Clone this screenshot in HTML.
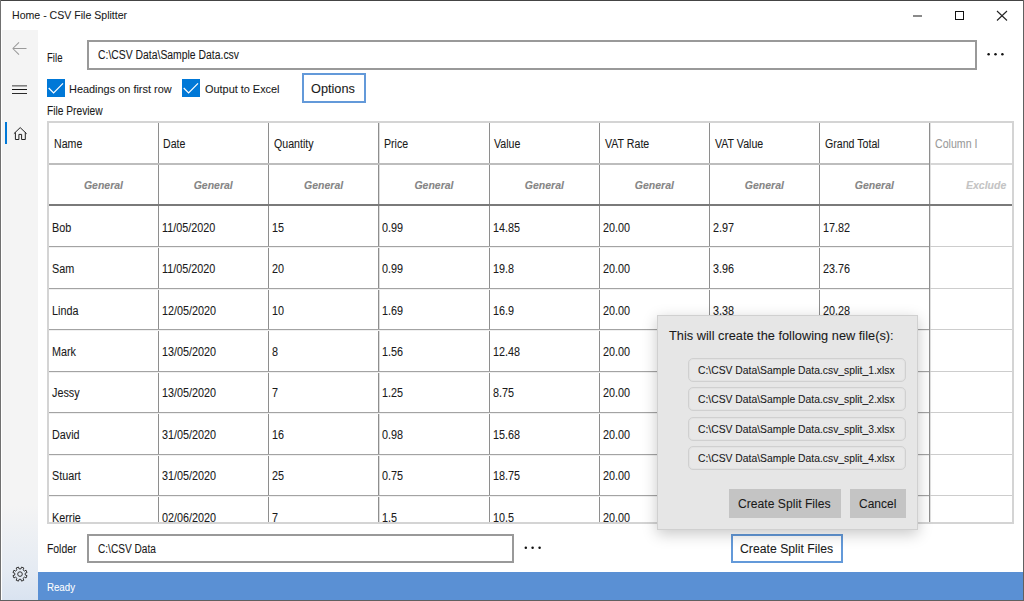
<!DOCTYPE html>
<html><head><meta charset="utf-8">
<style>
*{margin:0;padding:0;box-sizing:border-box}
html,body{width:1024px;height:601px;overflow:hidden;background:#fff}
body{position:relative;font-family:"Liberation Sans",sans-serif;color:#1a1a1a}
.a{position:absolute}
.t{position:absolute;white-space:pre;line-height:1;font-size:11.5px;transform-origin:0 0;-webkit-text-stroke:0.08px currentColor}
</style></head><body>
<div class="a" style="left:0;top:0;width:1024px;height:1px;background:#444"></div>
<div class="a" style="left:0;top:0;width:1px;height:601px;background:#707070"></div>
<div class="a" style="left:1023px;top:0;width:1px;height:601px;background:#606060"></div>
<div class="a" style="left:0;top:600px;width:1024px;height:1px;background:#606060"></div>
<div class="t" style="left:12.10px;top:10.07px;font-size:11.5px;transform:scaleX(0.9191);;">Home - CSV File Splitter</div>
<div class="a" style="left:913px;top:15px;width:9px;height:2px;background:#8a8a8a"></div>
<div class="a" style="left:955px;top:11px;width:9px;height:9px;border:1px solid #111"></div>
<svg class="a" style="left:996px;top:10px" width="12" height="12" viewBox="0 0 12 12"><path d="M1 1L11 10.5M11 1L1 10.5" stroke="#222" stroke-width="1.1"/></svg>
<div class="a" style="left:2px;top:30px;width:36px;height:570px;background:linear-gradient(#f4f4f4 0px,#f4f4f4 475px,#e5ebf3 540px,#d9e3f0 570px)"></div>
<svg class="a" style="left:0;top:30px" width="38" height="570" viewBox="0 30 38 570">
<path d="M12.5 48.5H26.5M12.8 48.5L19 42.3M12.8 48.5L19 54.7" stroke="#9a9a9a" stroke-width="1.05" fill="none"/>
<rect x="12" y="85" width="15" height="1.6" fill="#808080"/>
<rect x="12" y="89" width="15" height="1" fill="#151515"/>
<rect x="12" y="93" width="15" height="1" fill="#2a2a2a"/>
<rect x="5" y="122" width="2" height="22" fill="#0078d7"/>
<path d="M13.9 133.7L20.2 127.6L26.6 133.7M15.4 132.4V139.5H18.9V134.4H21.6V139.5H25.3V132.4" stroke="#222" stroke-width="1" fill="none"/>
<path d="M25.22 575.03 L27.03 575.64 L26.06 577.98 L24.35 577.13 L23.03 578.45 L23.88 580.16 L21.54 581.13 L20.93 579.32 L19.07 579.32 L18.46 581.13 L16.12 580.16 L16.97 578.45 L15.65 577.13 L13.94 577.98 L12.97 575.64 L14.78 575.03 L14.78 573.17 L12.97 572.56 L13.94 570.22 L15.65 571.07 L16.97 569.75 L16.12 568.04 L18.46 567.07 L19.07 568.88 L20.93 568.88 L21.54 567.07 L23.88 568.04 L23.03 569.75 L24.35 571.07 L26.06 570.22 L27.03 572.56 L25.22 573.17Z" stroke="#333" stroke-width="1" fill="none"/>
<circle cx="20" cy="574.1" r="2.3" stroke="#333" stroke-width="1" fill="none"/>
</svg>
<div class="t" style="left:47.20px;top:52.24px;font-size:12px;transform:scaleX(0.8008);;">File</div>
<div class="a" style="left:87px;top:40px;width:890px;height:30px;border:2px solid #999"></div>
<div class="t" style="left:98.20px;top:49.24px;font-size:12px;transform:scaleX(0.8663);;">C:\CSV Data\Sample Data.csv</div>
<svg class="a" style="left:980px;top:48px" width="30" height="12"><circle cx="8.6" cy="6.3" r="1.25" fill="#111"/><circle cx="15.5" cy="6.3" r="1.25" fill="#111"/><circle cx="22.4" cy="6.3" r="1.25" fill="#111"/></svg>
<div class="a" style="left:47px;top:79px;width:18px;height:18px;background:#0078d7"></div>
<svg class="a" style="left:47px;top:79px" width="18" height="18"><path d="M1.7 9L6.6 14L16 4.3" stroke="#fff" stroke-width="1.2" fill="none"/></svg>
<div class="a" style="left:182px;top:79px;width:18px;height:18px;background:#0078d7"></div>
<svg class="a" style="left:182px;top:79px" width="18" height="18"><path d="M1.7 9L6.6 14L16 4.3" stroke="#fff" stroke-width="1.2" fill="none"/></svg>
<div class="t" style="left:69.10px;top:83.45px;font-size:11.75px;transform:scaleX(0.9297);;">Headings on first row</div>
<div class="t" style="left:204.50px;top:83.45px;font-size:11.75px;transform:scaleX(0.9275);;">Output to Excel</div>
<div class="a" style="left:302px;top:73px;width:64px;height:30px;border:2px solid #6399d9"></div>
<div class="t" style="left:311.00px;top:81.80px;font-size:13px;transform:scaleX(0.9779);;">Options</div>
<div class="t" style="left:47.00px;top:105.14px;font-size:12px;transform:scaleX(0.8515);;">File Preview</div>
<div class="a" style="left:47px;top:121px;width:967px;height:403px;border:2px solid #d4d4d4"></div>
<div class="a" style="left:49px;top:123px;width:963px;height:399px;overflow:hidden">
<div class="a" style="left:109px;top:0px;width:1px;height:400px;background:#8e8e8e"></div>
<div class="a" style="left:219px;top:0px;width:1px;height:400px;background:#8e8e8e"></div>
<div class="a" style="left:329px;top:0px;width:1px;height:400px;background:#8e8e8e"></div>
<div class="a" style="left:440px;top:0px;width:1px;height:400px;background:#8e8e8e"></div>
<div class="a" style="left:550px;top:0px;width:1px;height:400px;background:#8e8e8e"></div>
<div class="a" style="left:660px;top:0px;width:1px;height:400px;background:#8e8e8e"></div>
<div class="a" style="left:770px;top:0px;width:1px;height:400px;background:#8e8e8e"></div>
<div class="a" style="left:880px;top:0px;width:1px;height:400px;background:#8e8e8e"></div>
<div class="a" style="left:330px;top:0px;width:1px;height:400px;background:#dcdcdc"></div>
<div class="a" style="left:881px;top:0px;width:1px;height:400px;background:#e0e0e0"></div>
<div class="a" style="left:0px;top:40px;width:880px;height:1.5px;background:#bdbdbd"></div>
<div class="a" style="left:881px;top:40px;width:83px;height:1.5px;background:#d6d6d6"></div>
<div class="a" style="left:0px;top:81px;width:964px;height:2px;background:#7a7a7a"></div>
<div class="a" style="left:0px;top:123px;width:880px;height:1px;background:#a3a3a3"></div>
<div class="a" style="left:0px;top:124px;width:880px;height:1px;background:#f0f0f0"></div>
<div class="a" style="left:881px;top:123px;width:83px;height:1px;background:#cdcdcd"></div>
<div class="a" style="left:0px;top:165px;width:880px;height:1px;background:#a3a3a3"></div>
<div class="a" style="left:0px;top:166px;width:880px;height:1px;background:#f0f0f0"></div>
<div class="a" style="left:881px;top:165px;width:83px;height:1px;background:#cdcdcd"></div>
<div class="a" style="left:0px;top:206px;width:880px;height:1px;background:#a3a3a3"></div>
<div class="a" style="left:0px;top:207px;width:880px;height:1px;background:#f0f0f0"></div>
<div class="a" style="left:881px;top:206px;width:83px;height:1px;background:#cdcdcd"></div>
<div class="a" style="left:0px;top:248px;width:880px;height:1px;background:#a3a3a3"></div>
<div class="a" style="left:0px;top:249px;width:880px;height:1px;background:#f0f0f0"></div>
<div class="a" style="left:881px;top:248px;width:83px;height:1px;background:#cdcdcd"></div>
<div class="a" style="left:0px;top:289px;width:880px;height:1px;background:#a3a3a3"></div>
<div class="a" style="left:0px;top:290px;width:880px;height:1px;background:#f0f0f0"></div>
<div class="a" style="left:881px;top:289px;width:83px;height:1px;background:#cdcdcd"></div>
<div class="a" style="left:0px;top:331px;width:880px;height:1px;background:#a3a3a3"></div>
<div class="a" style="left:0px;top:332px;width:880px;height:1px;background:#f0f0f0"></div>
<div class="a" style="left:881px;top:331px;width:83px;height:1px;background:#cdcdcd"></div>
<div class="a" style="left:0px;top:372px;width:880px;height:1px;background:#a3a3a3"></div>
<div class="a" style="left:0px;top:373px;width:880px;height:1px;background:#f0f0f0"></div>
<div class="a" style="left:881px;top:372px;width:83px;height:1px;background:#cdcdcd"></div>
<div class="t" style="left:4.90px;top:15.44px;font-size:12px;transform:scaleX(0.885);color:#1a1a1a">Name</div>
<div class="t" style="left:114.20px;top:15.44px;font-size:12px;transform:scaleX(0.885);color:#1a1a1a">Date</div>
<div class="t" style="left:224.70px;top:15.44px;font-size:12px;transform:scaleX(0.885);color:#1a1a1a">Quantity</div>
<div class="t" style="left:334.90px;top:15.44px;font-size:12px;transform:scaleX(0.885);color:#1a1a1a">Price</div>
<div class="t" style="left:445.40px;top:15.44px;font-size:12px;transform:scaleX(0.885);color:#1a1a1a">Value</div>
<div class="t" style="left:555.70px;top:15.44px;font-size:12px;transform:scaleX(0.885);color:#1a1a1a">VAT Rate</div>
<div class="t" style="left:665.50px;top:15.44px;font-size:12px;transform:scaleX(0.885);color:#1a1a1a">VAT Value</div>
<div class="t" style="left:775.70px;top:15.44px;font-size:12px;transform:scaleX(0.885);color:#1a1a1a">Grand Total</div>
<div class="t" style="left:885.50px;top:15.44px;font-size:12px;transform:scaleX(0.885);color:#9a9a9a">Column I</div>
<div class="t" style="left:0px;top:56.96px;width:109px;text-align:center;font-size:10.5px;font-weight:bold;font-style:italic;color:#858585">General</div>
<div class="t" style="left:109px;top:56.96px;width:110.5px;text-align:center;font-size:10.5px;font-weight:bold;font-style:italic;color:#858585">General</div>
<div class="t" style="left:219.5px;top:56.96px;width:110.19999999999999px;text-align:center;font-size:10.5px;font-weight:bold;font-style:italic;color:#858585">General</div>
<div class="t" style="left:329.7px;top:56.96px;width:110.5px;text-align:center;font-size:10.5px;font-weight:bold;font-style:italic;color:#858585">General</div>
<div class="t" style="left:440.2px;top:56.96px;width:110.30000000000001px;text-align:center;font-size:10.5px;font-weight:bold;font-style:italic;color:#858585">General</div>
<div class="t" style="left:550.5px;top:56.96px;width:109.79999999999995px;text-align:center;font-size:10.5px;font-weight:bold;font-style:italic;color:#858585">General</div>
<div class="t" style="left:660.3px;top:56.96px;width:110.20000000000005px;text-align:center;font-size:10.5px;font-weight:bold;font-style:italic;color:#858585">General</div>
<div class="t" style="left:770.5px;top:56.96px;width:109.79999999999995px;text-align:center;font-size:10.5px;font-weight:bold;font-style:italic;color:#858585">General</div>
<div class="t" style="left:917px;top:56.96px;font-size:10.5px;font-weight:bold;font-style:italic;color:#c4c4c4">Exclude</div>
<div class="t" style="left:2.90px;top:98.74px;font-size:12px;transform:scaleX(0.90)">Bob</div>
<div class="t" style="left:112.60px;top:98.74px;font-size:12px;transform:scaleX(0.90)">11/05/2020</div>
<div class="t" style="left:223.10px;top:98.74px;font-size:12px;transform:scaleX(0.90)">15</div>
<div class="t" style="left:333.30px;top:98.74px;font-size:12px;transform:scaleX(0.90)">0.99</div>
<div class="t" style="left:443.80px;top:98.74px;font-size:12px;transform:scaleX(0.90)">14.85</div>
<div class="t" style="left:554.10px;top:98.74px;font-size:12px;transform:scaleX(0.90)">20.00</div>
<div class="t" style="left:663.90px;top:98.74px;font-size:12px;transform:scaleX(0.90)">2.97</div>
<div class="t" style="left:774.10px;top:98.74px;font-size:12px;transform:scaleX(0.90)">17.82</div>
<div class="t" style="left:2.90px;top:140.16px;font-size:12px;transform:scaleX(0.90)">Sam</div>
<div class="t" style="left:112.60px;top:140.16px;font-size:12px;transform:scaleX(0.90)">11/05/2020</div>
<div class="t" style="left:223.10px;top:140.16px;font-size:12px;transform:scaleX(0.90)">20</div>
<div class="t" style="left:333.30px;top:140.16px;font-size:12px;transform:scaleX(0.90)">0.99</div>
<div class="t" style="left:443.80px;top:140.16px;font-size:12px;transform:scaleX(0.90)">19.8</div>
<div class="t" style="left:554.10px;top:140.16px;font-size:12px;transform:scaleX(0.90)">20.00</div>
<div class="t" style="left:663.90px;top:140.16px;font-size:12px;transform:scaleX(0.90)">3.96</div>
<div class="t" style="left:774.10px;top:140.16px;font-size:12px;transform:scaleX(0.90)">23.76</div>
<div class="t" style="left:2.90px;top:181.58px;font-size:12px;transform:scaleX(0.90)">Linda</div>
<div class="t" style="left:112.60px;top:181.58px;font-size:12px;transform:scaleX(0.90)">12/05/2020</div>
<div class="t" style="left:223.10px;top:181.58px;font-size:12px;transform:scaleX(0.90)">10</div>
<div class="t" style="left:333.30px;top:181.58px;font-size:12px;transform:scaleX(0.90)">1.69</div>
<div class="t" style="left:443.80px;top:181.58px;font-size:12px;transform:scaleX(0.90)">16.9</div>
<div class="t" style="left:554.10px;top:181.58px;font-size:12px;transform:scaleX(0.90)">20.00</div>
<div class="t" style="left:663.90px;top:181.58px;font-size:12px;transform:scaleX(0.90)">3.38</div>
<div class="t" style="left:774.10px;top:181.58px;font-size:12px;transform:scaleX(0.90)">20.28</div>
<div class="t" style="left:2.90px;top:223.00px;font-size:12px;transform:scaleX(0.90)">Mark</div>
<div class="t" style="left:112.60px;top:223.00px;font-size:12px;transform:scaleX(0.90)">13/05/2020</div>
<div class="t" style="left:223.10px;top:223.00px;font-size:12px;transform:scaleX(0.90)">8</div>
<div class="t" style="left:333.30px;top:223.00px;font-size:12px;transform:scaleX(0.90)">1.56</div>
<div class="t" style="left:443.80px;top:223.00px;font-size:12px;transform:scaleX(0.90)">12.48</div>
<div class="t" style="left:554.10px;top:223.00px;font-size:12px;transform:scaleX(0.90)">20.00</div>
<div class="t" style="left:663.90px;top:223.00px;font-size:12px;transform:scaleX(0.90)">2.50</div>
<div class="t" style="left:774.10px;top:223.00px;font-size:12px;transform:scaleX(0.90)">14.98</div>
<div class="t" style="left:2.90px;top:264.42px;font-size:12px;transform:scaleX(0.90)">Jessy</div>
<div class="t" style="left:112.60px;top:264.42px;font-size:12px;transform:scaleX(0.90)">13/05/2020</div>
<div class="t" style="left:223.10px;top:264.42px;font-size:12px;transform:scaleX(0.90)">7</div>
<div class="t" style="left:333.30px;top:264.42px;font-size:12px;transform:scaleX(0.90)">1.25</div>
<div class="t" style="left:443.80px;top:264.42px;font-size:12px;transform:scaleX(0.90)">8.75</div>
<div class="t" style="left:554.10px;top:264.42px;font-size:12px;transform:scaleX(0.90)">20.00</div>
<div class="t" style="left:663.90px;top:264.42px;font-size:12px;transform:scaleX(0.90)">1.75</div>
<div class="t" style="left:774.10px;top:264.42px;font-size:12px;transform:scaleX(0.90)">10.50</div>
<div class="t" style="left:2.90px;top:305.84px;font-size:12px;transform:scaleX(0.90)">David</div>
<div class="t" style="left:112.60px;top:305.84px;font-size:12px;transform:scaleX(0.90)">31/05/2020</div>
<div class="t" style="left:223.10px;top:305.84px;font-size:12px;transform:scaleX(0.90)">16</div>
<div class="t" style="left:333.30px;top:305.84px;font-size:12px;transform:scaleX(0.90)">0.98</div>
<div class="t" style="left:443.80px;top:305.84px;font-size:12px;transform:scaleX(0.90)">15.68</div>
<div class="t" style="left:554.10px;top:305.84px;font-size:12px;transform:scaleX(0.90)">20.00</div>
<div class="t" style="left:663.90px;top:305.84px;font-size:12px;transform:scaleX(0.90)">3.14</div>
<div class="t" style="left:774.10px;top:305.84px;font-size:12px;transform:scaleX(0.90)">18.82</div>
<div class="t" style="left:2.90px;top:347.26px;font-size:12px;transform:scaleX(0.90)">Stuart</div>
<div class="t" style="left:112.60px;top:347.26px;font-size:12px;transform:scaleX(0.90)">31/05/2020</div>
<div class="t" style="left:223.10px;top:347.26px;font-size:12px;transform:scaleX(0.90)">25</div>
<div class="t" style="left:333.30px;top:347.26px;font-size:12px;transform:scaleX(0.90)">0.75</div>
<div class="t" style="left:443.80px;top:347.26px;font-size:12px;transform:scaleX(0.90)">18.75</div>
<div class="t" style="left:554.10px;top:347.26px;font-size:12px;transform:scaleX(0.90)">20.00</div>
<div class="t" style="left:663.90px;top:347.26px;font-size:12px;transform:scaleX(0.90)">3.75</div>
<div class="t" style="left:774.10px;top:347.26px;font-size:12px;transform:scaleX(0.90)">22.50</div>
<div class="t" style="left:2.90px;top:388.68px;font-size:12px;transform:scaleX(0.90)">Kerrie</div>
<div class="t" style="left:112.60px;top:388.68px;font-size:12px;transform:scaleX(0.90)">02/06/2020</div>
<div class="t" style="left:223.10px;top:388.68px;font-size:12px;transform:scaleX(0.90)">7</div>
<div class="t" style="left:333.30px;top:388.68px;font-size:12px;transform:scaleX(0.90)">1.5</div>
<div class="t" style="left:443.80px;top:388.68px;font-size:12px;transform:scaleX(0.90)">10.5</div>
<div class="t" style="left:554.10px;top:388.68px;font-size:12px;transform:scaleX(0.90)">20.00</div>
<div class="t" style="left:663.90px;top:388.68px;font-size:12px;transform:scaleX(0.90)">2.10</div>
<div class="t" style="left:774.10px;top:388.68px;font-size:12px;transform:scaleX(0.90)">12.60</div>
</div>
<div class="t" style="left:47.00px;top:542.84px;font-size:12px;transform:scaleX(0.8648);;">Folder</div>
<div class="a" style="left:87px;top:534px;width:427px;height:29px;border:2px solid #999"></div>
<div class="t" style="left:97.80px;top:542.84px;font-size:12px;transform:scaleX(0.8435);;">C:\CSV Data</div>
<svg class="a" style="left:518px;top:542px" width="30" height="12"><circle cx="7.8" cy="5.7" r="1.25" fill="#111"/><circle cx="14.6" cy="5.7" r="1.25" fill="#111"/><circle cx="21.6" cy="5.7" r="1.25" fill="#111"/></svg>
<div class="a" style="left:731px;top:534px;width:112px;height:29px;border:2px solid #6399d9;background:#fff"></div>
<div class="t" style="left:740.00px;top:543.22px;font-size:12.5px;transform:scaleX(0.9789);;">Create Split Files</div>
<div class="a" style="left:38px;top:572px;width:985px;height:28px;background:#5a90d4"></div>
<div class="t" style="left:47.10px;top:582.07px;font-size:11.5px;transform:scaleX(0.8413);color:#fff;;">Ready</div>
<div class="a" style="left:657px;top:315px;width:261px;height:215px;background:#e6e6e6;border:1px solid #d0d0d0;box-shadow:0 4px 14px rgba(0,0,0,0.22)"></div>
<div class="t" style="left:668.80px;top:330.24px;font-size:12px;transform:scaleX(1.0657);;">This will create the following new file(s):</div>
<div class="a" style="left:688px;top:358px;width:218px;height:24px;border:1px solid #d0d0d0;border-radius:5px;background:#e8e8e8;box-shadow:inset 0 0 0 1px #e2e2e2"></div>
<div class="t" style="left:698.3px;top:364.79px;font-size:11px;transform:scaleX(0.9407)">C:\CSV Data\Sample Data.csv_split_1.xlsx</div>
<div class="a" style="left:688px;top:387px;width:218px;height:24px;border:1px solid #d0d0d0;border-radius:5px;background:#e8e8e8;box-shadow:inset 0 0 0 1px #e2e2e2"></div>
<div class="t" style="left:698.3px;top:393.79px;font-size:11px;transform:scaleX(0.9407)">C:\CSV Data\Sample Data.csv_split_2.xlsx</div>
<div class="a" style="left:688px;top:417px;width:218px;height:24px;border:1px solid #d0d0d0;border-radius:5px;background:#e8e8e8;box-shadow:inset 0 0 0 1px #e2e2e2"></div>
<div class="t" style="left:698.3px;top:423.79px;font-size:11px;transform:scaleX(0.9407)">C:\CSV Data\Sample Data.csv_split_3.xlsx</div>
<div class="a" style="left:688px;top:446px;width:218px;height:24px;border:1px solid #d0d0d0;border-radius:5px;background:#e8e8e8;box-shadow:inset 0 0 0 1px #e2e2e2"></div>
<div class="t" style="left:698.3px;top:452.79px;font-size:11px;transform:scaleX(0.9407)">C:\CSV Data\Sample Data.csv_split_4.xlsx</div>
<div class="a" style="left:729px;top:489px;width:112px;height:29px;background:#c4c4c4"></div>
<div class="t" style="left:738.10px;top:498.02px;font-size:12.5px;transform:scaleX(0.9726);;">Create Split Files</div>
<div class="a" style="left:850px;top:489px;width:56px;height:29px;background:#c4c4c4"></div>
<div class="t" style="left:859.10px;top:498.02px;font-size:12.5px;transform:scaleX(0.959);;">Cancel</div>
</body></html>
